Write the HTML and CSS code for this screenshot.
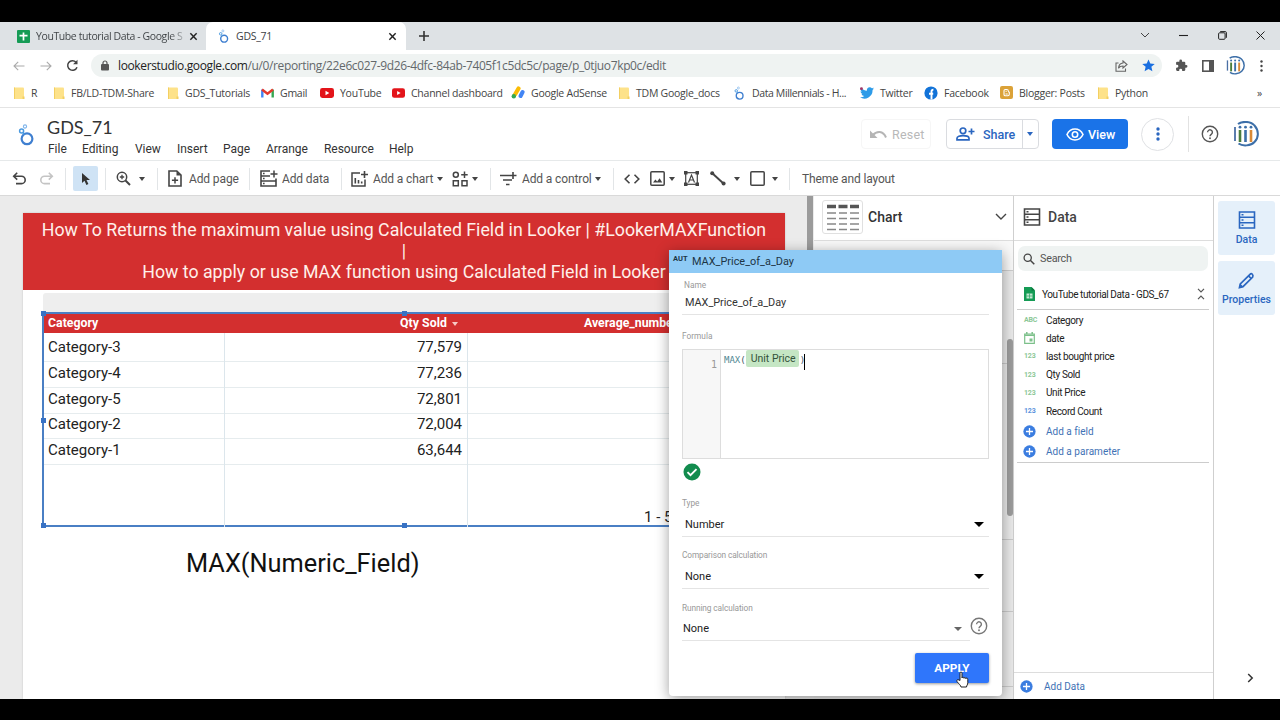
FILE: index.html
```html
<!DOCTYPE html>
<html lang="en">
<head>
<meta charset="utf-8">
<title>GDS_71</title>
<link rel="stylesheet" href="styles.css">
</head>
<body>
<svg class="defs" width="0" height="0" aria-hidden="true">
  <symbol id="looker" viewBox="0 0 16 22"><circle cx="9" cy="15.3" r="5.4" fill="none" stroke="#3f7fd0" stroke-width="2.200"/><circle cx="3.600" cy="7.600" r="2" fill="none" stroke="#4b9ae0" stroke-width="1.500"/><path d="M5 9.200 6.400 11" stroke="#4b9ae0" stroke-width="1.400"/><circle cx="7" cy="3" r="1.600" fill="none" stroke="#7fb4ea" stroke-width="1.100"/></symbol>
  <symbol id="folder" viewBox="0 0 12 14"><path d="M1 1.5h9a1 1 0 0 1 1 1V12l-1.5 1H1z" fill="#fde28a"/><path d="M1 1.5h1V13H1zM9.5 10.500h2V13h-2z" fill="#f3cf62"/></symbol>
  <symbol id="yt" viewBox="0 0 14 10"><rect width="14" height="10" rx="2.4" fill="#e3141a"/><path d="M5.500 2.800v4.400L9.300 5z" fill="#fff"/></symbol>
  <symbol id="avatar" viewBox="0 0 26 26"><path d="M5 3C9 0 18 0 21.500 4.500c4.500 5 4.500 12 0 16.500-3.500 4-12 4.500-16 1.500" fill="none" stroke="#3d6fa8" stroke-width="2"/><path d="M2 6v14" stroke="#4a6fa5" stroke-width="1.800"/><path d="M7 9v12" stroke="#4a7d3c" stroke-width="2.600"/><path d="M12.500 9v12" stroke="#3d6fa8" stroke-width="2.600"/><path d="M18 9v12" stroke="#d98a36" stroke-width="2.600"/><g fill="#3d6fa8"><circle cx="7" cy="6.200" r="1.400"/><circle cx="12.500" cy="6.200" r="1.400"/><circle cx="18" cy="6.200" r="1.400"/></g></symbol>
  <symbol id="server" viewBox="0 0 18 18"><path d="M1.500 1h15v16h-15zM1.500 6.300h15M1.500 11.700h15" fill="none" stroke="currentColor" stroke-width="1.600"/><path d="M3.500 3.700h2M3.500 9h2M3.500 14.300h2" stroke="currentColor" stroke-width="1.500"/></symbol>
  <symbol id="help" viewBox="0 0 18 18"><circle cx="9" cy="9" r="7.700" fill="none" stroke="currentColor" stroke-width="1.400"/><path d="M6.600 7.300a2.400 2.400 0 1 1 3.800 1.900C9.500 9.900 9 10.200 9 11.200" fill="none" stroke="currentColor" stroke-width="1.400"/><circle cx="9" cy="13.200" r=".95" fill="currentColor"/></symbol>
  <symbol id="plusdot" viewBox="0 0 14 14"><circle cx="7" cy="7" r="6.600" fill="#3b7de0"/><path d="M7 3.200v7.600M3.200 7h7.600" stroke="#fff" stroke-width="1.400"/></symbol>
  <symbol id="close" viewBox="0 0 10 10"><path d="m1.500 1.500 7 7m0-7-7 7" stroke="currentColor" stroke-width="1.600" fill="none"/></symbol>
</svg>

<div class="screen">
  <header class="tabstrip">
    <div class="tab">
      <svg class="fav" width="13" height="13" viewBox="0 0 13 13"><rect width="13" height="13" rx="1" fill="#159b55"/><path d="M6.500 2.500v8M2.500 5.700h8" stroke="#fff" stroke-width="1.700"/></svg>
      <span class="tab-title fade">YouTube tutorial Data - Google S</span>
      <svg class="x" width="9" height="9"><use href="#close"/></svg>
    </div>
    <div class="tab active">
      <svg class="fav" width="11" height="14"><use href="#looker"/></svg>
      <span class="tab-title">GDS_71</span>
      <svg class="x" width="9" height="9"><use href="#close"/></svg>
    </div>
    <svg class="newtab" width="12" height="12" viewBox="0 0 12 12"><path d="M6 1v10M1 6h10" stroke="#333" stroke-width="1.600"/></svg>
    <div class="winctl">
      <svg width="10" height="6" viewBox="0 0 10 6"><path d="m1 1 4 4 4-4" fill="none" stroke="#444"/></svg>
      <svg width="9" height="9" viewBox="0 0 9 9"><path d="M0 4.500h9" stroke="#222" stroke-width="1.100"/></svg>
      <svg width="9" height="9" viewBox="0 0 9 9"><rect x=".6" y="1.800" width="6.500" height="6.500" rx="1" fill="none" stroke="#222"/><path d="M2.200.6h5q1.200 0 1.200 1.200v5" fill="none" stroke="#222"/></svg>
      <svg width="9" height="9" viewBox="0 0 9 9"><path d="m.5.5 8 8m0-8-8 8" stroke="#222"/></svg>
    </div>
  </header>

  <div class="address">
    <svg class="nav" width="12" height="10" viewBox="0 0 12 10"><path d="M11.500 5H1.200M5.200.8 1 5l4.200 4.200" fill="none" stroke="#aaa" stroke-width="1.100"/></svg>
    <svg class="nav" width="12" height="10" viewBox="0 0 12 10"><path d="M.5 5h10.300M6.800.8 11 5 6.800 9.200" fill="none" stroke="#aaa" stroke-width="1.100"/></svg>
    <svg class="nav" width="13" height="13" viewBox="0 0 13 13"><path d="M11 8.200A4.800 4.800 0 1 1 10 3.200" fill="none" stroke="#444" stroke-width="1.500"/><path d="M11.500.8v4.400H7.100z" fill="#444"/></svg>
    <div class="omnibox">
      <svg width="8" height="11" viewBox="0 0 8 11"><rect y="4" width="8" height="6.500" rx="1" fill="#555"/><path d="M2 4.500V3a2 2 0 0 1 4 0v1.500" fill="none" stroke="#555" stroke-width="1.200"/></svg>
      <span class="url"><b>lookerstudio.google.com</b>/u/0/reporting/22e6c027-9d26-4dfc-84ab-7405f1c5dc5c/page/p_0tjuo7kp0c/edit</span>
      <svg class="sharepg" width="13" height="12" viewBox="0 0 13 12"><path d="M3.500 3H1v8.200h9.500V8.500M8 1l4 3.500L8 8V6C6 6 4.500 6.500 3.500 8.200 3.800 5 5.500 3.200 8 3z" fill="none" stroke="#666" stroke-width="1.100"/></svg>
      <svg class="star" width="13" height="13" viewBox="0 0 24 24"><path d="m12 .8 3.300 7.600 8.200.7-6.200 5.400 1.900 8.100L12 18.300l-7.200 4.300 1.900-8.100L.5 9.100l8.200-.7z" fill="#1a6fe0"/></svg>
    </div>
    <svg class="puz" width="13" height="13" viewBox="0 0 24 24"><path d="M20.500 11H19V7a2 2 0 0 0-2-2h-4V3.500a2.500 2.500 0 0 0-5 0V5H4a2 2 0 0 0-2 2v3.800h1.500a2.700 2.700 0 0 1 0 5.400H2V20a2 2 0 0 0 2 2h3.800v-1.500a2.700 2.700 0 0 1 5.400 0V22H17a2 2 0 0 0 2-2v-4h1.500a2.500 2.500 0 0 0 0-5z" fill="#555"/></svg>
    <svg class="side" width="12" height="12" viewBox="0 0 12 12"><rect x=".8" y=".8" width="10.400" height="10.400" fill="none" stroke="#555" stroke-width="1.600"/><path d="M7 1h4.500v10H7z" fill="#555"/></svg>
    <svg class="ava" width="19" height="19"><use href="#avatar"/></svg>
    <svg class="dots" width="3" height="12" viewBox="0 0 3 12" fill="#444"><circle cx="1.500" cy="1.500" r="1.200"/><circle cx="1.500" cy="6" r="1.200"/><circle cx="1.500" cy="10.500" r="1.200"/></svg>
  </div>

  <nav class="bookmarks">
    <a><svg width="12" height="14"><use href="#folder"/></svg><span>R</span></a>
    <a><svg width="12" height="14"><use href="#folder"/></svg><span>FB/LD-TDM-Share</span></a>
    <a><svg width="12" height="14"><use href="#folder"/></svg><span>GDS_Tutorials</span></a>
    <a><svg width="13" height="10" viewBox="0 0 13 10"><path d="M1.300 9.500V1.500" stroke="#4285f4" stroke-width="2.400"/><path d="M11.700 9.500V1.500" stroke="#34a853" stroke-width="2.400"/><path d="m1 1.500 5.500 4.300L12 1.500" fill="none" stroke="#e5392d" stroke-width="2.400"/></svg><span>Gmail</span></a>
    <a><svg width="14" height="10"><use href="#yt"/></svg><span>YouTube</span></a>
    <a><svg width="13" height="10"><use href="#yt"/></svg><span>Channel dashboard</span></a>
    <a><svg width="14" height="13" viewBox="0 0 14 13"><path d="m7.500 2.500-3.500 6" stroke="#fbbc04" stroke-width="4.200" stroke-linecap="round"/><circle cx="2.800" cy="10.200" r="2.200" fill="#34a853"/><path d="m11.600 6-2 4" stroke="#4285f4" stroke-width="4" stroke-linecap="round"/></svg><span>Google AdSense</span></a>
    <a><svg width="12" height="14"><use href="#folder"/></svg><span>TDM Google_docs</span></a>
    <a class="wide"><svg width="10" height="14"><use href="#looker"/></svg><span>Data Millennials - H...</span></a>
    <a><svg width="14" height="12" viewBox="0 0 24 20"><path d="M24 2.400c-.9.400-1.800.7-2.800.8 1-.6 1.800-1.600 2.200-2.700-1 .6-2 1-3.100 1.200A4.900 4.900 0 0 0 11.900 6C7.800 5.900 4.200 3.900 1.700.9A4.900 4.900 0 0 0 3.200 7.500C2.400 7.400 1.700 7.200 1 6.800c0 2.300 1.600 4.400 3.900 4.900-.7.200-1.500.2-2.200.1.600 2 2.400 3.400 4.600 3.400A9.900 9.900 0 0 1 0 17.200 13.900 13.900 0 0 0 21.500 4.900C22.500 4.200 23.300 3.400 24 2.400z" fill="#2d9be8"/><circle cx="2.500" cy="2.500" r="2.500" fill="#a33565"/></svg><span>Twitter</span></a>
    <a><svg width="14" height="14" viewBox="0 0 14 14"><circle cx="7" cy="7" r="6.600" fill="#1273d8"/><path d="M7.500 13.500V5.500q0-1.800 1.900-1.700M5 7.800h4.200" fill="none" stroke="#fff" stroke-width="1.900"/></svg><span>Facebook</span></a>
    <a><svg width="13" height="13" viewBox="0 0 13 13"><rect width="13" height="13" rx="2" fill="#dba238"/><path d="M4 4.800q0-1.300 1.300-1.300h1.500q1.500 0 1.500 1.500 0 1 1 1.200v2q0 1.500-1.500 1.500H5.300Q4 9.700 4 8.400zM5.500 5.200h1.300M5.500 8h2.200" fill="none" stroke="#fff" stroke-width="1.100"/></svg><span>Blogger: Posts</span></a>
    <a><svg width="12" height="14"><use href="#folder"/></svg><span>Python</span></a>
    <a><span class="more">»</span></a>
  </nav>

  <section class="apphead">
    <svg class="logo" width="16" height="23"><use href="#looker"/></svg>
    <div class="heading">
      <h1>GDS_71</h1>
      <nav class="menu"><span>File</span><span>Editing</span><span>View</span><span>Insert</span><span>Page</span><span>Arrange</span><span>Resource</span><span>Help</span></nav>
    </div>
    <button class="reset"><svg width="17" height="10" viewBox="0 0 17 10"><path d="M2.500 6.500C7 1.500 13 1.800 16 8.500" fill="none" stroke="#b5b5b5" stroke-width="2"/><path d="M0 1.500v7.500h7.500z" fill="#b5b5b5"/></svg>Reset</button>
    <div class="share"><button class="share-main"><svg width="19" height="14" viewBox="0 0 19 14"><circle cx="7" cy="3.800" r="2.800" fill="none" stroke="#2a66c0" stroke-width="1.700"/><path d="M1 12.800v-1.500C1 9.500 4 8.700 7 8.700s6 .8 6 2.600v1.500zM15.500 1.500v6M12.500 4.500h6" fill="none" stroke="#2a66c0" stroke-width="1.700"/></svg>Share</button><button class="share-more"><i class="caret"></i></button></div>
    <button class="view"><svg width="18" height="13" viewBox="0 0 18 13"><path d="M1 6.500C4.500-.8 13.500-.8 17 6.500c-3.500 7.300-12.500 7.300-16 0z" fill="none" stroke="#fff" stroke-width="1.600"/><circle cx="9" cy="6.500" r="2.700" fill="none" stroke="#fff" stroke-width="1.600"/></svg>View</button>
    <button class="kebab"><svg width="4" height="14" viewBox="0 0 4 14" fill="#2a66c0"><circle cx="2" cy="2" r="1.700"/><circle cx="2" cy="7" r="1.700"/><circle cx="2" cy="12" r="1.700"/></svg></button>
    <i class="vline"></i>
    <svg class="helpic" width="18" height="18"><use href="#help"/></svg>
    <svg class="me" width="26" height="26"><use href="#avatar"/></svg>
  </section>

  <section class="toolbar">
    <svg width="15" height="13" viewBox="0 0 15 13"><path d="M2 4.200h7.500a3.700 3.700 0 0 1 0 7.400H4M5.200.8 1.700 4.200l3.500 3.400" fill="none" stroke="#444" stroke-width="1.600"/></svg>
    <svg width="15" height="13" viewBox="0 0 15 13"><path d="M13 4.200H5.500a3.700 3.700 0 0 0 0 7.400H11M9.800.8l3.500 3.400-3.500 3.400" fill="none" stroke="#c4c4c4" stroke-width="1.600"/></svg>
    <i class="sep"></i>
    <span class="picked"><svg width="10" height="14" viewBox="0 0 10 14"><path d="M1 1v10l2.500-2.200L5.400 13l2-.9-1.900-4H9z" fill="#333"/></svg></span>
    <i class="sep"></i>
    <svg width="15" height="15" viewBox="0 0 15 15"><circle cx="6" cy="6" r="4.700" fill="none" stroke="#444" stroke-width="1.500"/><path d="m9.500 9.500 4.500 4.500" stroke="#444" stroke-width="1.900"/><path d="M6 3.800v4.400M3.800 6h4.400" stroke="#444" stroke-width="1.300"/></svg>
    <i class="caret"></i>
    <i class="sep"></i>
    <svg width="14" height="17" viewBox="0 0 14 17"><path d="M1 1h7.800L13 5v11H1z" fill="none" stroke="#444" stroke-width="1.600"/><path d="M8.500 1v4.500H13z" fill="#444"/><path d="M7 7.200v6.200M3.900 10.300h6.200" stroke="#444" stroke-width="1.500"/></svg>
    <span>Add page</span>
    <i class="sep"></i>
    <svg width="18" height="17" viewBox="0 0 18 17"><path d="M10 1H1v15h15V8.500M1 6h9M1 11h15" fill="none" stroke="#444" stroke-width="1.600"/><path d="M3 3.500h1.600M3 8.500h1.600M3 13.500h1.600M14 .5v7M10.500 4h7" stroke="#444" stroke-width="1.500"/></svg>
    <span>Add data</span>
    <i class="sep"></i>
    <svg width="17" height="16" viewBox="0 0 17 16"><path d="M9 2H1v13h13V8.500" fill="none" stroke="#444" stroke-width="1.500"/><path d="M4.300 7v5.500M7.500 9v3.500M10.700 10.500v2M13.500 0v7M10 3.500h7" stroke="#444" stroke-width="1.600"/></svg>
    <span>Add a chart</span><i class="caret"></i>
    <svg width="17" height="16" viewBox="0 0 17 16"><circle cx="3.800" cy="3.700" r="2.500" fill="none" stroke="#444" stroke-width="1.500"/><path d="M12.500.5v6.500M9.200 3.700h6.500" stroke="#444" stroke-width="1.500"/><path d="M1.300 9.800h5v5h-5zM10 9.800h5v5h-5z" fill="none" stroke="#444" stroke-width="1.500"/></svg><i class="caret"></i>
    <i class="sep"></i>
    <svg width="17" height="14" viewBox="0 0 17 14"><path d="M0 3.500h16.500M3 8h9M6 12.500h3.500M13 0v7" stroke="#444" stroke-width="1.600"/></svg>
    <span>Add a control</span><i class="caret"></i>
    <i class="sep"></i>
    <svg width="16" height="10" viewBox="0 0 16 10"><path d="M5.500.7 1.200 5l4.300 4.300M10.500.7 14.800 5l-4.300 4.300" fill="none" stroke="#444" stroke-width="1.600"/></svg>
    <svg width="15" height="15" viewBox="0 0 15 15"><rect x=".8" y=".8" width="13.400" height="13.400" rx="1" fill="none" stroke="#444" stroke-width="1.500"/><path d="m3 11.500 2.400-3 1.800 2 2.400-3.200 2.700 4.200z" fill="#444"/></svg><i class="caret"></i>
    <svg width="15" height="15" viewBox="0 0 15 15"><rect x="1.700" y="1.700" width="11.600" height="11.600" fill="none" stroke="#444" stroke-width="1.200"/><path d="M0 0h3.500v3.500H0zM11.500 0H15v3.500h-3.500zM0 11.500h3.500V15H0zM11.500 11.500H15V15h-3.500z" fill="#444"/><path d="M4.500 11.500 7.500 4l3 7.500M5.500 9h4" fill="none" stroke="#444" stroke-width="1.200"/></svg>
    <svg width="16" height="15" viewBox="0 0 16 15"><path d="m2 2 12 11" stroke="#444" stroke-width="1.900"/><circle cx="2.200" cy="2.200" r="2" fill="#444"/><circle cx="13.600" cy="12.600" r="2" fill="#444"/></svg><i class="caret"></i>
    <svg width="15" height="15" viewBox="0 0 15 15"><rect x=".8" y=".8" width="13.400" height="13.400" rx="1" fill="none" stroke="#444" stroke-width="1.500"/></svg><i class="caret"></i>
    <i class="sep"></i>
    <span class="theme">Theme and layout</span>
  </section>

  <main class="work">
    <section class="canvas">
      <article class="page">
        <div class="banner">How To Returns the maximum value using Calculated Field in Looker | #LookerMAXFunction<br>|<br>How to apply or use MAX function using Calculated Field in Looker</div>
        <div class="strip"></div>
        <div class="table">
          <div class="row head"><span>Category</span><span>Qty Sold <i class="caret"></i></span><span>Average_number</span></div>
          <div class="row"><span>Category-3</span><span>77,579</span><span></span></div>
          <div class="row"><span>Category-4</span><span>77,236</span><span></span></div>
          <div class="row"><span>Category-5</span><span>72,801</span><span></span></div>
          <div class="row"><span>Category-2</span><span>72,004</span><span></span></div>
          <div class="row"><span>Category-1</span><span>63,644</span><span></span></div>
          <div class="row foot"><span></span><span></span><span>1 - 5</span></div>
          <i class="hd tl"></i><i class="hd tc"></i><i class="hd ml"></i><i class="hd bl"></i><i class="hd bc"></i>
        </div>
        <p class="formula-note">MAX(Numeric_Field)</p>
      </article>
      <i class="vscroll"></i>
    </section>

    <aside class="chart">
      <div class="chart-head">
        <span class="thumb"><svg width="34" height="27" viewBox="0 0 34 27"><path d="M1 2.500h9M12.500 2.500h9M24 2.500h9" stroke="#555" stroke-width="3.500"/><path d="M1 9h9M13 9h8M24 9h9M1 14.500h9M13 14.500h8M24 14.500h9M1 20h9M13 20h8M24 20h9M1 25.500h9M13 25.500h8M24 25.500h9" stroke="#888" stroke-width="1.600"/></svg></span>
        <span>Chart</span>
        <svg class="chev" width="12" height="8" viewBox="0 0 12 8"><path d="m1 1 5 5 5-5" fill="none" stroke="#444" stroke-width="1.400"/></svg>
      </div>
      <div class="chart-tabs"></div>
      <div class="chart-body"><i></i><i></i><i></i><i></i><b class="thumbbar"></b></div>
    </aside>

    <aside class="data">
      <div class="data-head"><svg width="18" height="18"><use href="#server"/></svg><span>Data</span></div>
      <div class="search"><svg width="12" height="12" viewBox="0 0 12 12"><circle cx="4.700" cy="4.700" r="3.600" fill="none" stroke="#444" stroke-width="1.300"/><path d="m7.300 7.300 4 4" stroke="#444" stroke-width="1.500"/></svg><span>Search</span></div>
      <div class="source"><svg width="11" height="14" viewBox="0 0 11 14"><path d="M0 0h7.500L11 3.500V14H0z" fill="#159b55"/><path d="M7.500 0 11 3.500H7.500z" fill="#0b7a3e"/><path d="M2.500 6.500h6v5h-6z" fill="#c4e8d2"/><path d="M2.500 9h6M5.500 6.500v5" stroke="#159b55" stroke-width=".6"/></svg><span>YouTube tutorial Data - GDS_67</span><svg width="8" height="12" viewBox="0 0 8 12"><path d="m1 .8 3 3 3-3M1 11.200l3-3 3 3" fill="none" stroke="#555" stroke-width="1.200"/></svg></div>
      <div class="fields">
        <div><em>ABC</em><span>Category</span></div>
        <div><svg width="11" height="12" viewBox="0 0 11 12"><path d="M.7 2h9.600v9.300H.7z" fill="none" stroke="#7cc08a" stroke-width="1.200"/><path d="M.7 3.300h9.600M2.800 0v2M8.200 0v2" stroke="#7cc08a" stroke-width="1.500"/><path d="M5.500 6.500h3v3h-3z" fill="#7cc08a"/></svg><span>date</span></div>
        <div><em>123</em><span>last bought price</span></div>
        <div><em>123</em><span>Qty Sold</span></div>
        <div><em>123</em><span>Unit Price</span></div>
        <div><em class="blue">123</em><span>Record Count</span></div>
        <div class="add"><svg width="13" height="13"><use href="#plusdot"/></svg><span>Add a field</span></div>
        <div class="add"><svg width="13" height="13"><use href="#plusdot"/></svg><span>Add a parameter</span></div>
      </div>
      <div class="add adddata"><svg width="13" height="13"><use href="#plusdot"/></svg><span>Add Data</span></div>
    </aside>

    <aside class="rail">
      <div class="railbtn"><svg width="18" height="18"><use href="#server"/></svg><span>Data</span></div>
      <div class="railbtn"><svg width="17" height="17" viewBox="0 0 17 17"><path d="M1.500 15.500 2.300 12 12 2.300q1.200-1.200 2.300 0t.4 2.700L5 14.700z" fill="none" stroke="#2a66c0" stroke-width="1.700"/><path d="m10.500 3.800 2.700 2.700M2 12.500l2.500 2.500" stroke="#2a66c0" stroke-width="1.700"/></svg><span>Properties</span></div>
      <svg class="next" width="7" height="10" viewBox="0 0 7 10"><path d="m1.200 1 4 4-4 4" fill="none" stroke="#333" stroke-width="1.500"/></svg>
    </aside>
  </main>

  <div class="dialog">
    <div class="dlg-head"><small>AUT</small><span>MAX_Price_of_a_Day</span></div>
    <div class="dlg-body">
      <label class="lname">Name</label>
      <div class="val name">MAX_Price_of_a_Day</div>
      <label class="lformula">Formula</label>
      <div class="editor"><span class="gutter">1</span><code><span class="fn">MAX</span>(<span class="chip">Unit Price</span>)<i class="cursor"></i></code></div>
      <svg class="ok" width="18" height="18" viewBox="0 0 18 18"><circle cx="9" cy="9" r="8.500" fill="#128c4e"/><path d="m4.500 9.200 3 3 6-6" fill="none" stroke="#fff" stroke-width="1.900"/></svg>
      <label class="ltype">Type</label>
      <div class="val sel">Number<i class="caret"></i></div>
      <label class="lcomp">Comparison calculation</label>
      <div class="val sel">None<i class="caret"></i></div>
      <label class="lrun">Running calculation</label>
      <div class="runrow"><div class="val sel run">None<i class="caret"></i></div><svg width="18" height="18"><use href="#help"/></svg></div>
      <button class="apply">APPLY</button>
    </div>
    <svg class="hand" width="13" height="17" viewBox="0 0 13 17"><path d="M4 9.500V2.200c0-1.600 2-1.600 2 0V7c0-1.100 2-1.100 2 .3 0-1.100 1.900-1.100 1.900.4 0-1 1.900-1 1.900.5v3.600c0 2-1.300 2.700-1.300 4.200H5c0-1.500-2.200-3-4-5.500C0 9 2 8 4 9.500z" fill="#fff" stroke="#222" stroke-width="1"/></svg>
  </div>
</div>
</body>
</html>
```
FILE: styles.css
```css
* { box-sizing: border-box; }
body { margin: 0; background: #000; font-family: Roboto, "Liberation Sans", sans-serif; color: #333; }
button { border: 0; background: none; padding: 0; margin: 0; font: inherit; color: inherit; display: flex; align-items: center; }
svg { display: block; flex: none; }
.defs { position: absolute; }
i, em { font-style: normal; }
.screen { position: relative; width: 1280px; height: 720px; padding: 22px 0 21px; overflow: hidden; display: flex; flex-direction: column; background: #000; }
.caret { display: block; flex: none; width: 0; height: 0; border: 3.5px solid transparent; border-top: 4px solid #444; border-bottom: 0; }

.tabstrip { height: 28px; background: #dee2e5; display: flex; align-items: center; font: 10.5px "Open Sans", "Noto Sans", sans-serif; color: #3c4043; flex: none; }
.tab { width: 206px; height: 28px; padding-left: 17px; display: flex; align-items: center; }
.tab.active { width: 200px; padding-left: 12px; background: #fff; border-radius: 7px 7px 0 0; }
.tab-title { width: 152px; margin-left: 6px; white-space: nowrap; letter-spacing: -.25px; }
.tab.active .tab-title { margin-left: 7px; width: 151px; }
.tab .fade { letter-spacing: -.4px; background: linear-gradient(90deg, #3c4043 88%, #dee2e5 101%); -webkit-background-clip: text; background-clip: text; color: transparent; }
.tab .x { margin-left: 1px; color: #222; }
.newtab { margin-left: 12px; }
.winctl { margin: 0 15px 2px auto; width: 125px; display: flex; justify-content: space-between; align-items: center; height: 24px; }

.address { height: 30px; background: #fff; display: flex; align-items: center; flex: none; padding: 1px 0 0 13px; }
.nav { margin-right: 15px; }
.nav + .nav + .nav { margin: 0 12px 0 -1px; }
.omnibox { width: 1071px; height: 23px; border-radius: 12px; background: #eff3f2; display: flex; align-items: center; padding: 0 7px 0 10px; }
.url { margin-left: 9px; font: 12px "Open Sans", "Noto Sans", sans-serif; color: #63686b; letter-spacing: -.37px; white-space: nowrap; }
.url b { font-weight: 400; color: #222; }
.sharepg { margin-left: auto; }
.star { margin-left: 14px; }
.puz { margin-left: 13px; }
.side { margin-left: 14px; }
.ava { margin-left: 12px; }
.dots { margin-left: 15px; }

.bookmarks { height: 28px; background: #fff; border-bottom: 1px solid #e4e4e4; display: grid; grid-template-columns: 40px 114px 94px 59px 72px 119px 107px 116px 126px 64px 76px 97px 160px 20px; align-items: center; padding: 0 0 2px 13px; font: 10.5px "Open Sans", "Noto Sans", sans-serif; color: #444; flex: none; letter-spacing: -.25px; }
.bookmarks a { display: flex; align-items: center; white-space: nowrap; gap: 6px; }
.bookmarks .wide { gap: 8px; letter-spacing: -.38px; }

.apphead { height: 53px; background: #fff; border-bottom: 1px solid #e6e9ea; display: flex; align-items: center; flex: none; }
.logo { margin: 0 0 0 18px; }
.heading { width: 815px; padding: 8px 0 0 13px; }
h1 { margin: 0; font: 18px/21px Lato, Roboto, sans-serif; color: #333; }
.menu { display: grid; grid-template-columns: 34px 53px 42px 46px 43px 58px 65px 40px; margin-top: 1px; font-size: 12px; line-height: 21px; padding-left: 1px; color: #333; letter-spacing: -.03px; }
.reset { width: 70px; height: 30px; margin-left: 12px; border: 1px solid #f6f6f6; border-radius: 4px; font-size: 12.5px; color: #b8b8b8; padding-left: 8px; gap: 5px; letter-spacing: .2px; }
.share { display: flex; margin-left: 15px; width: 93px; height: 30px; border: 1px solid #dadce0; border-radius: 4px; color: #2a66c0; font-size: 12.5px; font-weight: 500; letter-spacing: .1px; }
.share-main { width: 76px; padding-left: 9px; gap: 8px; }
.share-more { width: 16px; border-left: 1px solid #dadce0; padding-left: 4px; }
.share .caret { border-top-color: #2a66c0; }
.view { width: 76px; height: 30px; margin-left: 13px; border-radius: 4px; background: #1a73e8; color: #fff; font-size: 12.5px; font-weight: 500; padding-left: 14px; gap: 4px; }
.kebab { width: 33px; height: 33px; margin-left: 13px; border: 1px solid #dfe1e4; border-radius: 50%; justify-content: center; }
.vline { width: 1px; height: 36px; background: #e2e2e2; margin-left: 14px; }
.helpic { margin-left: 12px; color: #555; }
.me { margin-left: 14px; }

.toolbar { height: 35px; background: #fff; border-bottom: 1px solid #d9d9d9; display: grid; align-items: center; padding: 1px 0 0 12px; flex: none; font-size: 12px; letter-spacing: -.12px; color: #555; white-space: nowrap;
  grid-template-columns: 27px 26px 8px 32px 11px 23px 18px 11px 21px 60px 11px 22px 59px 10px 22px 64px 15px 20px 18px 10px 22px 73px 18px 11px 26px 19px 15px 26px 24px 16px 22px 17px 13px 100px; }
.sep { width: 1px; height: 22px; background: #e2e5e7; }
.picked { width: 25px; height: 25px; background: #cfe3f5; border-radius: 2px; display: flex; align-items: center; justify-content: center; }
.theme { letter-spacing: -.15px; }

.work { flex: 1; display: flex; min-height: 0; }
.canvas { width: 814px; background: #ebebeb; padding: 17px 0 0 23px; position: relative; display: flex; overflow: hidden; }
.page { width: 762px; background: #fff; flex: none; box-shadow: 0 0 2px rgba(0,0,0,.15); }
.vscroll { width: 6px; height: 140px; background: #9b9b9b; margin: -17px 0 0 22px; border-radius: 0 0 3px 3px; }
.banner { height: 77px; background: #d32f2f; color: #fff0ea; text-align: center; font-size: 17.760px; line-height: 21px; padding: 7px 0 6px; white-space: nowrap; }
.strip { margin: 3px 0 0 20px; height: 21px; background: #eee; border-radius: 3px 0 0 0; }
.table { position: relative; margin: -2px 0 0 19px; height: 215px; border: 2px solid #4a7fc4; border-right: 0; }
.row { display: grid; grid-template-columns: 181px 243px 1fr; height: 25.800px; font-size: 15px; color: #222; line-height: 28px; }
.row span { border-right: 1px solid #dce6ec; border-bottom: 1px solid #e6ecee; padding: 0 4px; }
.row span + span { text-align: right; padding-right: 5px; }
.row span:last-child { border-right: 0; }
.row.head { height: 19px; background: #d32f2f; color: #fff; font-size: 12.300px; font-weight: 700; line-height: 19px; }
.row.head span { border: 0; display: flex; gap: 5px; align-items: center; }
.row.head span:nth-child(2) { justify-content: flex-end; padding-right: 10px; letter-spacing: .05px; }
.row.head span:nth-child(3) { padding-left: 116px; }
.row.head .caret { border-top-color: #f7c9c5; border-width: 4px 3px 0; }
.row.foot { height: 63px; }
.row.foot span { border-bottom: 0; }
.row.foot span:last-child { text-align: left; padding: 41px 0 0 176px; line-height: 20px; padding-top: 45px; }
.hd { position: absolute; width: 5px; height: 5px; background: #3872c4; }
.tl { left: -3px; top: -3px; } .tc { left: 358px; top: -3px; } .ml { left: -3px; top: 104px; } .bl { left: -3px; bottom: -3px; } .bc { left: 358px; bottom: -3px; }
.formula-note { margin: 19px 0 0 163px; font-size: 25.350px; line-height: 34px; color: #111; }

.chart { width: 200px; background: #fff; border-right: 1px solid #cfcfcf; display: flex; flex-direction: column; }
.chart-head { height: 45px; padding: 0 6px 2px 8px; display: flex; align-items: center; font-size: 14px; font-weight: 500; border-bottom: 1px solid #ddd; flex: none; }
.thumb { width: 41px; height: 34px; border: 1px solid #e0e0e0; border-radius: 3px; display: flex; align-items: center; justify-content: center; margin-right: 5px; }
.chev { margin-left: auto; }
.chart-tabs { height: 30px; background: #f8f8f8; flex: none; border-bottom: 1px solid #ccc; }
.chart-body { flex: 1; background: #e9e9e9; position: relative; display: flex; flex-direction: column; }
.chart-body > i { border-bottom: 1px solid #c9c9c9; height: 93px; flex: none; }
.chart-body > i + i { height: 176px; }
.chart-body > i + i + i { height: 72px; }
.chart-body > i + i + i + i { height: 75px; }
.thumbbar { position: absolute; right: 0; top: 68px; width: 6px; height: 177px; border-radius: 3px; background: #9c9c9c; }

.data { width: 200px; background: #fff; border-right: 1px solid #cfcfcf; display: flex; flex-direction: column; padding-left: 3px; }
.data-head { height: 45px; margin-left: -3px; border-bottom: 1px solid #ddd; display: flex; align-items: center; gap: 7px; padding: 0 0 2px 9px; font-size: 14px; font-weight: 500; flex: none; color: #444; }
.search { height: 25px; margin: 5px 5px 0 1px; border-radius: 7px; background: #eff3f2; display: flex; align-items: center; gap: 5px; padding-left: 5px; font-size: 10.800px; letter-spacing: -.25px; color: #555; flex: none; }
.source { height: 39px; border-bottom: 1px solid #ccc; margin-right: 4px; display: flex; align-items: center; padding: 8px 4px 0 7px; font-size: 10px; flex: none; letter-spacing: -.4px; color: #222; }
.source span { margin-left: 7px; flex: 1; white-space: nowrap; }
.fields { border-bottom: 1px solid #ccc; margin-right: 4px; height: 153px; padding-top: 1px; font-size: 10px; letter-spacing: -.37px; color: #222; flex: none; }
.fields div { display: flex; align-items: center; height: 18.200px; padding-left: 7px; }
.fields span { flex: 1; }
.fields em, .fields svg { margin-right: 11px; }
.fields em { width: 11px; font: 700 7px/10px Roboto, sans-serif; color: #8cc796; letter-spacing: -.2px; white-space: nowrap; }
.fields em.blue { color: #5b93dd; }
.add { color: #3f72b5; font-size: 10px; }
.fields .add { height: 20.500px; padding-left: 6px; letter-spacing: .02px; }
.fields div:not(.add) + .add { margin-top: 1px; }
.fields .add svg { margin-right: 10px; }
.adddata { margin: auto 0 0 -3px; border-top: 1px solid #ddd; height: 27px; display: flex; align-items: center; gap: 11px; padding-left: 6px; }

.rail { flex: 1; background: #fff; padding: 5px 5px 0 4px; display: flex; flex-direction: column; }
.railbtn { height: 54px; background: #e5f0fa; border-radius: 3px; display: flex; flex-direction: column; align-items: center; justify-content: center; gap: 4px; margin-bottom: 6px; color: #2a66c0; font-size: 10.500px; font-weight: 500; padding-top: 1px; }
.next { margin: auto 0 16px 29px; }

.dialog { position: absolute; left: 669px; top: 250px; width: 333px; height: 446px; background: #fff; border-radius: 0 0 4px 4px; box-shadow: 0 3px 14px rgba(0,0,0,.38); }
.dlg-head { height: 23px; background: #8ecaf5; display: flex; align-items: center; padding-left: 4px; color: #1d3545; font-size: 10.900px; }
.dlg-head small { font-size: 7.500px; font-weight: 700; width: 19px; margin-top: -6px; }
.dlg-body { padding: 7px 13px 0 13px; display: flex; flex-direction: column; font-size: 11px; }
label { font-size: 8.300px; line-height: 10px; color: #999; letter-spacing: -.1px; }
.lname { margin-left: 2px; letter-spacing: 0; }
.val { color: #333; line-height: 20px; height: 25px; border-bottom: 1px solid #e4e4e4; padding: 3px 3px 0; }
.name { font-size: 10.900px; letter-spacing: -.05px; }
.lformula { margin: 16px 0 8px; letter-spacing: 0; }
.editor { height: 110px; border: 1px solid #ddd; display: flex; }
.gutter { width: 38px; background: #f7f7f7; border-right: 1px solid #ddd; text-align: right; padding: 8px 3px; font: 10px/13px "DejaVu Sans Mono", monospace; color: #999; }
code { font: 9px/16px "DejaVu Sans Mono", monospace; display: flex; align-items: flex-start; padding: 2px 0 0 3px; color: #456; height: 20px; }
.fn { color: #4f8792; }
.chip { background: #c5e6c4; color: #33523a; font: 10.500px/17px Roboto, sans-serif; padding: 0 5px; margin-top: -2px; border-radius: 2px; width: 53px; white-space: nowrap; margin-right: 1px; }
.cursor { width: 1px; height: 16px; background: #000; margin-top: 2px; margin-left: -1px; }
.ok { margin: 4px 0 0 1px; }
.ltype { margin-top: 17px; }
.sel { display: flex; align-items: center; height: 27px; padding: 3px 5px 0 3px; color: #222; }
.sel .caret { margin-left: auto; border-width: 5px 5px 0; border-top-color: #000; }
.lcomp { margin-top: 13px; }
.lrun { margin-top: 14px; }
.ltype + .sel { margin-top: 2px; }
.lcomp + .sel { margin-top: 2px; }
.lrun + .runrow { margin-top: 1px; }
.runrow { display: flex; align-items: center; }
.run { width: 288px; padding: 3px 8px 0 1px; }
.run .caret { border-width: 4px 4px 0; border-top-color: #666; }
.runrow svg { color: #777; margin-top: -3px; }
.apply { align-self: flex-end; width: 74px; height: 30px; margin-top: 12px; background: #2f76fb; color: #fff; font-weight: 700; justify-content: center; border-radius: 2px; box-shadow: 0 1px 3px rgba(0,0,0,.4); font-size: 11.800px; }
.hand { position: absolute; left: 287px; top: 421px; }
```
